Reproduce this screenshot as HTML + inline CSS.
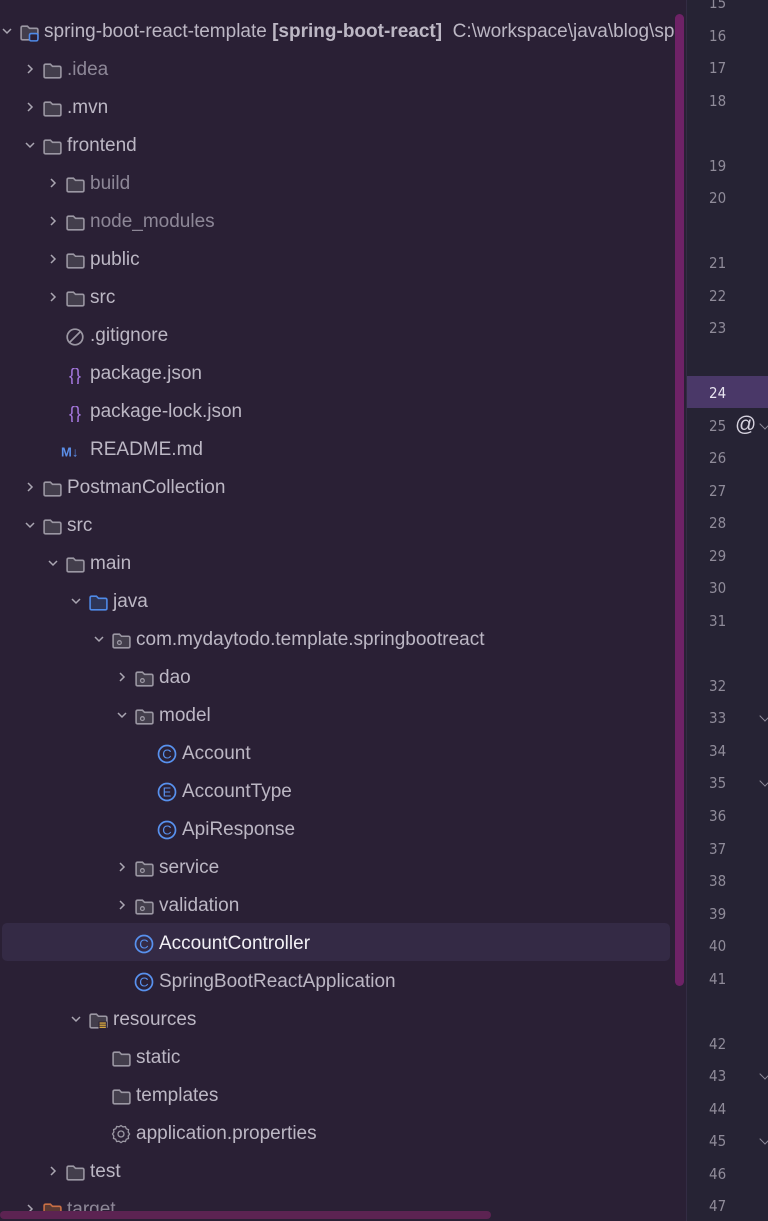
<!DOCTYPE html>
<html><head><meta charset="utf-8"><style>
*{margin:0;padding:0;box-sizing:border-box}
body{width:768px;height:1221px;background:#2a2035;overflow:hidden;position:relative;font-family:"Liberation Sans",sans-serif;}
#left{position:absolute;left:0;top:0;width:686px;height:1221px;overflow:hidden;background:#2a2035}
.row{position:absolute;left:0;height:38px;white-space:nowrap;font-size:19px;color:#bcb7c4;line-height:38px}
.row span{position:absolute;top:0}
.row svg{position:absolute;top:11px}
.dim{color:#8d8797 !important}
#right{position:absolute;left:686px;top:0;width:82px;height:1221px;background:#262334;border-left:1px solid #332c44}
.ln{position:absolute;left:22px;font-size:15px;color:#8f8b99;font-family:"DejaVu Sans","Liberation Sans",sans-serif;transform:scaleX(0.9);transform-origin:left}
.fold{position:absolute;left:74px;width:8px;height:8px;border-right:1.5px solid #8f8b99;border-bottom:1.5px solid #8f8b99;transform:rotate(45deg)}
</style></head><body>
<div id="left">
<div style="position:absolute;left:2px;top:923px;width:668px;height:38px;background:#342a45;border-radius:5px"></div>
<div id="tree"></div>
<div style="position:absolute;left:675px;top:14px;width:9px;height:972px;background:#6e2266;border-radius:5px"></div>
<div style="position:absolute;left:0;top:1211px;width:491px;height:8px;background:#5c2352;border-radius:4px"></div>
</div>
<div id="right">
<div style="position:absolute;left:0;top:376px;width:82px;height:32px;background:#4a3868"></div>
<div id="lines"></div>
<div style="position:absolute;left:48px;top:413px;font-size:21px;color:#d6d2de">@</div>
</div>
<script>
const F='#9b97a3';
function folder(c,fill,extra){return `<svg width="21" height="18" viewBox="0 0 20 17"><path d="M2 3.5Q2 2 3.5 2H8l2 2h6.5Q18 4 18 5.5v8Q18 15 16.5 15h-13Q2 15 2 13.5Z" fill="${fill}" stroke="${c}" stroke-width="1.5"/>${extra||''}</svg>`}
const icons={
f:folder(F,'#433e4c'),
fj:folder('#4f8ae8','#2e3557'),
fo:folder('#c96f45','#5a3a33'),
pk:folder(F,'#433e4c','<circle cx="8" cy="10" r="1.8" fill="none" stroke="#9b97a3" stroke-width="1.2"/>'),
rs:folder(F,'#433e4c','<rect x="10" y="9" width="8" height="7" fill="#2a2035"/><path d="M11 10.5h6M11 12.5h6M11 14.5h6" stroke="#d4a640" stroke-width="1.3"/>'),
root:folder(F,'#433e4c','<rect x="10" y="9" width="8" height="7" rx="1.5" fill="#2a2035" stroke="#4f8ae8" stroke-width="1.5"/>'),
gi:`<svg width="20" height="18" viewBox="0 0 20 17"><circle cx="10" cy="8.5" r="7.8" fill="none" stroke="${F}" stroke-width="1.7"/><path d="M5 13.5L15 3.5" stroke="${F}" stroke-width="1.7"/></svg>`,
js:`<svg width="20" height="18" viewBox="0 0 20 17"><text x="10" y="15" text-anchor="middle" font-size="18" fill="#a678e0" font-family="Liberation Sans">{}</text></svg>`,
md:`<svg width="26" height="18" viewBox="0 0 26 17"><text x="0" y="14" font-size="13" font-weight="bold" fill="#5b8ee8" font-family="Liberation Sans">M↓</text></svg>`,
c:`<svg width="20" height="20" viewBox="0 0 20 20" style="top:9px"><circle cx="10" cy="10" r="8.5" fill="none" stroke="#5891ee" stroke-width="1.7"/><text x="10" y="14.5" text-anchor="middle" font-size="13" fill="#5891ee" font-family="Liberation Sans">C</text></svg>`,
e:`<svg width="20" height="20" viewBox="0 0 20 20" style="top:9px"><circle cx="10" cy="10" r="8.5" fill="none" stroke="#5891ee" stroke-width="1.7"/><text x="10" y="14.5" text-anchor="middle" font-size="13" fill="#5891ee" font-family="Liberation Sans">E</text></svg>`,
g:`<svg width="20" height="20" viewBox="0 0 20 20" style="top:9px"><path d="M10 1.5l2 1.4 2.4-.3.9 2.2 2.2.9-.3 2.4 1.4 1.9-1.4 2 .3 2.4-2.2.9-.9 2.2-2.4-.3-2 1.4-2-1.4-2.4.3-.9-2.2-2.2-.9.3-2.4L1.5 10 2.9 8l-.3-2.4 2.2-.9.9-2.2 2.4.3z" fill="none" stroke="${F}" stroke-width="1.3"/><circle cx="10" cy="10" r="3" fill="none" stroke="${F}" stroke-width="1.3"/></svg>`
};
const rows=[
[0,'v','root','ROOT'],
[1,'>','f','.idea','dim'],
[1,'>','f','.mvn'],
[1,'v','f','frontend'],
[2,'>','f','build','dim'],
[2,'>','f','node_modules','dim'],
[2,'>','f','public'],
[2,'>','f','src'],
[2,'','gi','.gitignore'],
[2,'','js','package.json'],
[2,'','js','package-lock.json'],
[2,'','md','README.md'],
[1,'>','f','PostmanCollection'],
[1,'v','f','src'],
[2,'v','f','main'],
[3,'v','fj','java'],
[4,'v','pk','com.mydaytodo.template.springbootreact'],
[5,'>','pk','dao'],
[5,'v','pk','model'],
[6,'','c','Account'],
[6,'','e','AccountType'],
[6,'','c','ApiResponse'],
[5,'>','pk','service'],
[5,'>','pk','validation'],
[5,'','c','AccountController','sel'],
[5,'','c','SpringBootReactApplication'],
[3,'v','rs','resources'],
[4,'','f','static'],
[4,'','f','templates'],
[4,'','g','application.properties'],
[2,'>','f','test'],
[1,'>','fo','target','dim']
];
let h='';
rows.forEach((r,i)=>{
 const [lv,ch,ic,t,cl]=r;const y=13+38*i;const base=lv*23;
 let s=`<div class="row ${cl==='dim'?'dim':''}" style="top:${y}px;width:686px">`;
 if(ch){s+=`<svg width="12" height="12" viewBox="0 0 12 12" style="left:${base+1}px;top:12px"><path d="${ch==='>'?'M4 2l4 4-4 4':'M2 4l4 4 4-4'}" fill="none" stroke="#aaa6b2" stroke-width="1.5"/></svg>`;}
 s+=icons[ic].replace('<svg ',`<svg style="left:${base+(ic==='md'?15:19)}px" `).replace(/style="left:([0-9]+)px" (width="20" height="20" viewBox="0 0 20 20") style="top:9px"/,'style="left:$1px;top:9px" $2');
 let txt=t;
 if(t==='ROOT'){txt='spring-boot-react-template <b style="font-weight:bold">[spring-boot-react]</b>&nbsp; C:\\workspace\\java\\blog\\spring-boot-react-template';}
 s+=`<span style="left:${base+44}px;${cl==='sel'?'color:#f2f0f5':''}">${txt}</span></div>`;
 h+=s;
});
document.getElementById('tree').innerHTML=h;
const ln={15:3,16:36,17:68,18:101,19:166,20:198,21:263,22:296,23:328,24:393,25:426,26:458,27:491,28:523,29:556,30:588,31:621,32:686,33:718,34:751,35:783,36:816,37:849,38:881,39:914,40:946,41:979,42:1044,43:1076,44:1109,45:1141,46:1174,47:1206};
let l='';
for(const k in ln){l+=`<div class="ln" style="top:${ln[k]-9}px;${k==24?'color:#e8e4f0':''}">${k}</div>`;}
[25,33,35,43,45].forEach(k=>{l+=`<div class="fold" style="top:${ln[k]-6}px"></div>`});
document.getElementById('lines').innerHTML=l;
</script>
</body></html>
